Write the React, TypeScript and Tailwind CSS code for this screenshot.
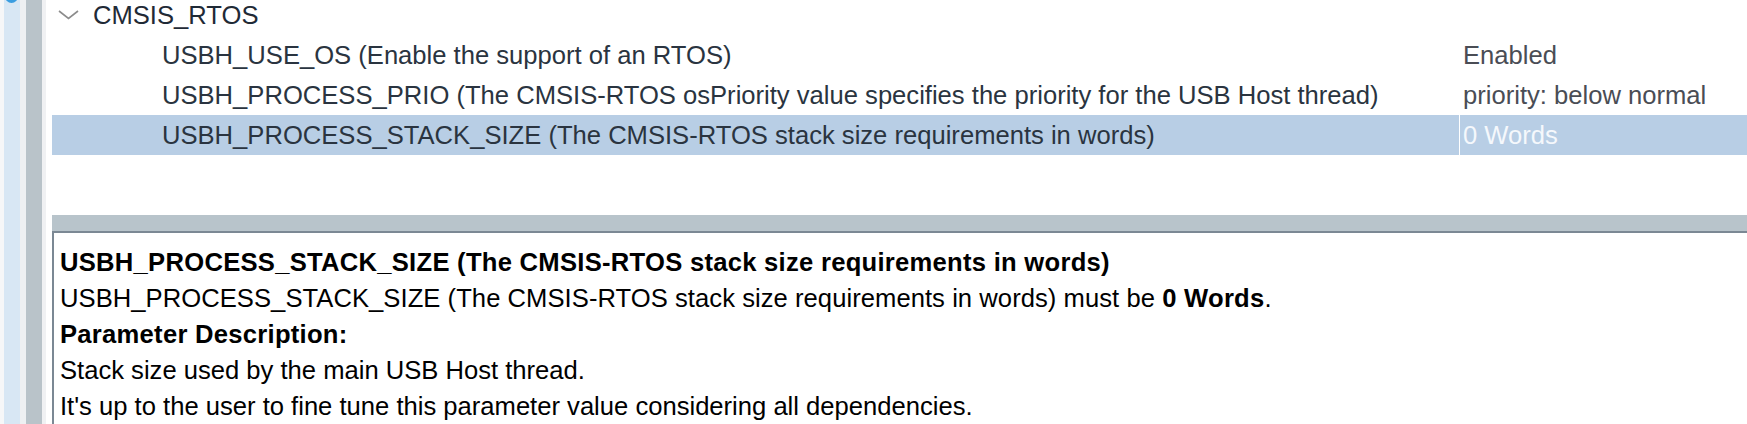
import React from "react";

const font = { fontFamily: '"Liberation Sans", Arial, sans-serif' };

function Chevron() {
  return (
    <svg width="22" height="10" viewBox="0 0 22 10" className="block">
      <polyline points="1,1 10.5,8.5 20,1" fill="none" stroke="#8c8c8c" strokeWidth="1.6" />
    </svg>
  );
}

type Row = { name: string; value: string; selected?: boolean };

const rows: Row[] = [
  { name: "USBH_USE_OS (Enable the support of an RTOS)", value: "Enabled" },
  {
    name: "USBH_PROCESS_PRIO (The CMSIS-RTOS osPriority value specifies the priority for the USB Host thread)",
    value: "priority: below normal",
  },
  {
    name: "USBH_PROCESS_STACK_SIZE (The CMSIS-RTOS stack size requirements in words)",
    value: "0 Words",
    selected: true,
  },
];

export default function App() {
  return (
    <div
      className="relative w-[1747px] h-[424px] overflow-hidden bg-white flex text-[25.6px]"
      style={font}
    >
      {/* left gutter strips */}
      <div className="w-[4px] bg-[#f6f7f8]" />
      <div className="w-[16px] bg-[#d8e7f4]" />
      <div className="w-[6px] bg-[#eef0f2]" />
      <div className="w-[16px] bg-[#b9c3c9]" />
      <div className="w-[4px] bg-[#f0f1f3]" />
      <div className="w-[6px] bg-white" />
      <div className="absolute left-[5px] top-[-10px] w-[13px] h-[13px] rounded-full bg-[#3a9de0]" />

      {/* main */}
      <div className="flex-1 flex flex-col min-w-0">
        <div className="h-[216px] overflow-hidden">
          <div className="mt-[-5px]">
            <div className="h-[40px] flex items-center leading-[40px] text-[#1f2a36]">
              <div className="w-[41px] pl-[6px] flex items-center">
                <Chevron />
              </div>
              <span>CMSIS_RTOS</span>
            </div>
            {rows.map((r) => (
              <div
                key={r.name}
                className={`h-[40px] flex leading-[40px] whitespace-nowrap ${r.selected ? "bg-[#b8cee5]" : ""}`}
              >
                <div className="w-[1407px] pl-[110px] text-[#2a3440] overflow-hidden">{r.name}</div>
                <div className={`w-[1px] ${r.selected ? "bg-white" : ""}`} />
                <div
                  className={`flex-1 pl-[3px] overflow-hidden ${r.selected ? "text-[#f5f8fc]" : "text-[#4a4d55]"}`}
                >
                  {r.value}
                </div>
              </div>
            ))}
          </div>
        </div>
        <div className="h-[18px] bg-[#b8c4cb] border-b-2 border-[#7b8894]" />
        <div className="flex-1 border-l-2 border-[#7b8894] pl-[6px] pt-[11px] text-black leading-[36px] whitespace-nowrap">
          <div className="font-bold tracking-[0.27px]">
            USBH_PROCESS_STACK_SIZE (The CMSIS-RTOS stack size requirements in words)
          </div>
          <div className="tracking-[0.05px]">
            USBH_PROCESS_STACK_SIZE (The CMSIS-RTOS stack size requirements in words) must be{" "}
            <span className="font-bold tracking-[0.27px]">0 Words</span>.
          </div>
          <div className="font-bold tracking-[0.27px]">Parameter Description:</div>
          <div>Stack size used by the main USB Host thread.</div>
          <div>It's up to the user to fine tune this parameter value considering all dependencies.</div>
        </div>
      </div>
    </div>
  );
}
